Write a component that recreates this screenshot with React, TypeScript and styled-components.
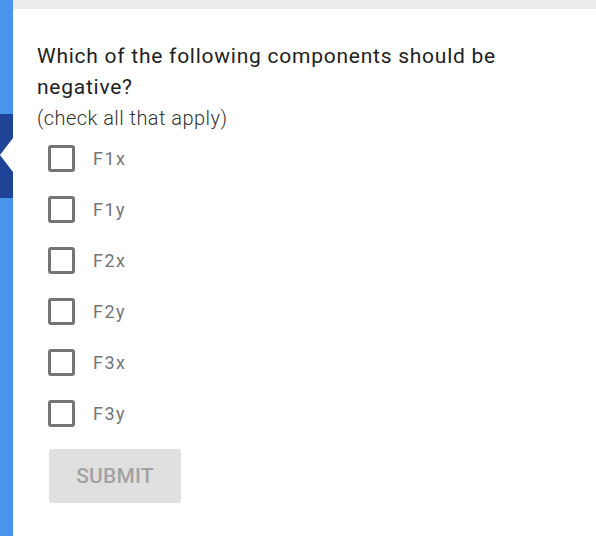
import React from 'react';
import styled, {createGlobalStyle} from 'styled-components';

const GlobalStyle = createGlobalStyle`
  html, body {
    margin: 0;
    padding: 0;
    background: #ffffff;
    font-family: Roboto, 'Noto Sans', Arial, sans-serif;
  }
`;

const Page = styled.div`
  display: flex;
  width: 596px;
  height: 536px;
  overflow: hidden;
`;

const SideRail = styled.div`
  width: 13px;
  flex-shrink: 0;
  background: #4a94ec;
  display: flex;
  flex-direction: column;
`;

// the dark block marks the current question, the white notch points at it
const ActiveMarker = styled.div`
  position: relative;
  margin-top: 114px;
  height: 84px;
  background: #1f4497;

  &::after {
    content: '';
    position: absolute;
    top: 24px;
    left: 0;
    width: 13px;
    height: 34px;
    background: #ffffff;
    clip-path: polygon(100% 0, 0 50%, 100% 100%);
  }
`;

const Main = styled.div`
  flex: 1;
  display: flex;
  flex-direction: column;
`;

const TopStrip = styled.div`
  height: 9px;
  background: #ebecee;
`;

const Content = styled.div`
  padding: 32px 24px 0 24px;
`;

const Question = styled.h2`
  margin: 0;
  font-size: 21px;
  font-weight: 400;
  letter-spacing: 0.75px;
  line-height: 31px;
  color: #212121;
  max-width: 500px;
`;

const Hint = styled.p`
  margin: 0;
  font-size: 20px;
  font-weight: 300;
  letter-spacing: 0.45px;
  line-height: 31px;
  color: #333333;
`;

const Options = styled.div`
  display: flex;
  flex-direction: column;
  margin-top: -1px;
  padding-left: 11px;
`;

const OptionRow = styled.label`
  display: flex;
  align-items: center;
  gap: 18px;
  height: 51px;
  cursor: pointer;
`;

const Box = styled.span<{$checked?: boolean}>`
  width: 27px;
  height: 27px;
  box-sizing: border-box;
  border: 3px solid #757575;
  border-radius: 3px;
  background: ${p => (p.$checked ? '#757575' : '#ffffff')};
`;

const OptionText = styled.span`
  font-size: 18px;
  letter-spacing: 1.5px;
  color: #757575;
`;

const SubmitButton = styled.button`
  margin-top: 10px;
  margin-left: 12px;
  width: 132px;
  height: 54px;
  border: none;
  border-radius: 3px;
  background: #e0e0e0;
  color: #a3a3a3;
  font-family: Roboto, Arial, sans-serif;
  font-size: 21px;
  font-weight: 500;
  letter-spacing: 0.2px;
  cursor: default;
`;

const options = ['F1x', 'F1y', 'F2x', 'F2y', 'F3x', 'F3y'];

const App: React.FC = () => {
  return (
    <>
      <GlobalStyle />
      <Page>
        <SideRail>
          <ActiveMarker />
        </SideRail>
        <Main>
          <TopStrip />
          <Content>
            <Question>Which of the following components should be negative?</Question>
            <Hint>(check all that apply)</Hint>
            <Options>
              {options.map(opt => (
                <OptionRow key={opt}>
                  <Box />
                  <OptionText>{opt}</OptionText>
                </OptionRow>
              ))}
            </Options>
            <SubmitButton disabled>SUBMIT</SubmitButton>
          </Content>
        </Main>
      </Page>
    </>
  );
};

export default App;
